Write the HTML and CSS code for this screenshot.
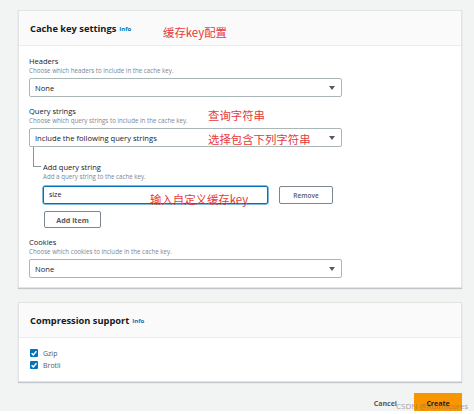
FILE: index.html
```html
<!DOCTYPE html>
<html>
<head>
<meta charset="utf-8">
<link rel="stylesheet" href="styles.css">
</head>
<body>
<div class="page">
  <section class="card">
    <header class="card-head">
      <h2 class="title">Cache key settings</h2><a class="info">Info</a>
    </header>
    <div class="card-body">
      <div class="field">
        <div class="label">Headers</div>
        <div class="desc">Choose which headers to include in the cache key.</div>
        <div class="select"><span>None</span><span class="caret"></span></div>
      </div>
      <div class="field">
        <div class="label">Query strings</div>
        <div class="desc">Choose which query strings to include in the cache key.</div>
        <div class="select"><span>Include the following query strings</span><span class="caret"></span></div>
        <div class="tree">
          <div class="branch"></div>
          <div class="sub">
            <div class="label">Add query string</div>
            <div class="desc">Add a query string to the cache key.</div>
            <div class="row">
              <div class="input">size</div>
              <div class="btn">Remove</div>
            </div>
            <div class="btn add">Add item</div>
          </div>
        </div>
      </div>
      <div class="field">
        <div class="label">Cookies</div>
        <div class="desc">Choose which cookies to include in the cache key.</div>
        <div class="select"><span>None</span><span class="caret"></span></div>
      </div>
    </div>
  </section>
  <section class="card card2">
    <header class="card-head">
      <h2 class="title">Compression support</h2><a class="info">Info</a>
    </header>
    <div class="card-body checks">
      <label class="check"><span class="box"><svg viewBox="0 0 8 8" width="8" height="8"><path d="M1.6 4.2 L3.3 5.9 L6.5 2.2" fill="none" stroke="#fff" stroke-width="1.4"/></svg></span>Gzip</label>
      <label class="check"><span class="box"><svg viewBox="0 0 8 8" width="8" height="8"><path d="M1.6 4.2 L3.3 5.9 L6.5 2.2" fill="none" stroke="#fff" stroke-width="1.4"/></svg></span>Brotli</label>
    </div>
  </section>
  <footer class="actions">
    <span class="cancel">Cancel</span>
    <span class="create">Create</span>
  </footer>
  <div class="note n1">缓存key配置</div>
  <div class="note n2">查询字符串</div>
  <div class="note n3">选择包含下列字符串</div>
  <div class="note n4">输入自定义缓存key</div>
  <div class="wm">CSDN @Ruimicures</div>
</div>
</body>
</html>
```
FILE: styles.css
```css
html { background: #fff; }
body { margin: 0; font-family: "Open Sans", "Noto Sans", "Noto Sans CJK SC", sans-serif; color: #16191f; }
.page {
  position: relative;
  height: 411px;
  background: #f2f3f3;
  padding: 10px 12px 0 18px;
  box-sizing: border-box;
  overflow: hidden;
}
.card {
  background: #fff;
  border: 1px solid #e3e5e5;
  box-shadow: 0 1px 1px rgba(0,22,40,0.2);
}
.card2 { margin-top: 14px; }
.card-head {
  height: 34px;
  background: #fafafa;
  border-bottom: 1px solid #eaeded;
  display: flex;
  align-items: center;
  padding-left: 11px;
}
.title { margin: 0; font-size: 9.3px; font-weight: 700; }
.info { font-size: 6px; font-weight: 700; color: #0073bb; margin-left: 3px; margin-top: 2px; }
.card-body { padding: 10px 0 9px 10px; }
.field + .field { margin-top: 9px; }
.label { font-size: 7.5px; line-height: 10px; font-weight: 400; color: #16191f; }
.desc { font-size: 6.2px; line-height: 9px; color: #7d8690; font-weight: 400; }
.select {
  margin-top: 3px;
  width: 313px;
  height: 19px;
  box-sizing: border-box;
  border: 1px solid #aab7b8;
  border-radius: 2px;
  display: flex;
  align-items: center;
  justify-content: space-between;
  padding: 0 6px 0 5px;
  font-size: 7.6px;
}
.caret {
  width: 0; height: 0;
  border-left: 3px solid transparent;
  border-right: 3px solid transparent;
  border-top: 4px solid #545b64;
}
.tree { display: flex; margin-left: 4px; }
.branch {
  width: 7px;
  height: 19px;
  border-left: 1px solid #879596;
  border-bottom: 1px solid #879596;
}
.sub { margin-left: 2px; margin-top: 15px; }
.row { display: flex; gap: 11px; margin-top: 5px; }
.input {
  width: 225px;
  height: 18px;
  box-sizing: border-box;
  border: 1px solid #0073bb;
  border-radius: 2px;
  font-size: 7px;
  line-height: 16px;
  padding-left: 5px;
  box-shadow: 0 0 0 0.5px #0073bb;
}
.btn {
  width: 54px;
  height: 18px;
  box-sizing: border-box;
  border: 1px solid #7d8690;
  border-radius: 2px;
  font-size: 6.5px;
  font-weight: 600;
  color: #545b64;
  display: flex;
  align-items: center;
  justify-content: center;
}
.btn.add { width: 57px; height: 17px; margin-top: 7px; margin-left: 1px; font-size: 7.2px; font-weight: 700; }
.checks { padding: 9px 0 10px 11px; }
.check { display: flex; align-items: center; height: 12px; font-size: 7px; color: #545b64; }
.box {
  width: 8px; height: 8px;
  background: #0073bb;
  border-radius: 1px;
  margin-right: 5px;
  display: flex;
}
.actions {
  display: flex;
  justify-content: flex-end;
  align-items: center;
  margin-top: 11px;
  gap: 17px;
}
.cancel { font-size: 7px; font-weight: 700; color: #545b64; }
.create {
  width: 48px;
  height: 20px;
  background: #f89500;
  color: #16191f;
  font-size: 7px;
  font-weight: 700;
  display: flex;
  align-items: center;
  justify-content: center;
}
.note {
  position: absolute;
  color: #e8383a;
  font-size: 11.4px;
  line-height: 14px;
  font-family: "Noto Sans CJK SC", sans-serif;
  white-space: nowrap;
}
.n1 { left: 163px; top: 25px; }
.n2 { left: 208px; top: 108px; }
.n3 { left: 208px; top: 132px; }
.n4 { left: 150px; top: 192px; }
.wm {
  position: absolute;
  left: 396px;
  top: 400px;
  font-size: 8px;
  color: rgba(120,120,120,0.7);
  white-space: nowrap;
}
```
